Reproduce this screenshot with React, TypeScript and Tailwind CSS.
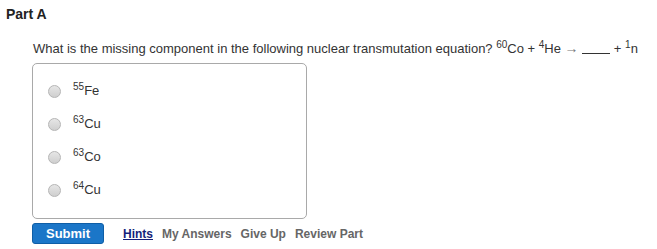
import { Fragment } from 'react';

// ─── Data ─────────────────────────────────────────────────────────────────────

const OPTIONS = [
  { mass: '55', symbol: 'Fe' },
  { mass: '63', symbol: 'Cu' },
  { mass: '63', symbol: 'Co' },
  { mass: '64', symbol: 'Cu' },
];

const LINKS = ['My Answers', 'Give Up', 'Review Part'];

// ─── Pieces ───────────────────────────────────────────────────────────────────

function Isotope({ mass, symbol }: { mass: string; symbol: string }) {
  return (
    <span>
      <sup className="text-[10px] relative -top-[5px]">{mass}</sup>
      {symbol}
    </span>
  );
}

function Radio() {
  return (
    <span className="block w-[13px] h-[13px] rounded-full border border-[#b5b5b5] bg-gradient-to-b from-[#e6e6e6] to-[#cfcfcf]" />
  );
}

// ─── Component ────────────────────────────────────────────────────────────────

export default function App() {
  return (
    <div
      className="w-[657px] h-[249px] bg-white text-[#333] pt-[5px]"
      style={{ fontFamily: '"Liberation Sans", Arial, sans-serif' }}
    >
      <h2 className="pl-[6px] text-[14px] font-bold leading-[18px] text-[#222]">Part A</h2>

      <p className="pl-[33px] mt-[16px] text-[13px] leading-[18px]">
        What is the missing component in the following nuclear transmutation equation?{' '}
        <Isotope mass="60" symbol="Co" /> + <Isotope mass="4" symbol="He" />{' '}
        <span className="text-[#777] text-[14px]">→</span>{' '}
        <span className="inline-block w-[28px] border-b border-[#333] translate-y-[1px]" /> +{' '}
        <Isotope mass="1" symbol="n" />
      </p>

      <div className="ml-[32px] mt-[5px] w-[275px] h-[156px] border border-[#a9a9a9] rounded-[5px] pt-[19px] pl-[15px] flex flex-col gap-[17px]">
        {OPTIONS.map((o, i) => (
          <label key={i} className="flex items-center h-[16px] text-[13px]">
            <Radio />
            <span className="ml-[12px]">
              <Isotope mass={o.mass} symbol={o.symbol} />
            </span>
          </label>
        ))}
      </div>

      <div className="ml-[32px] mt-[4px] flex items-center">
        <button className="w-[72px] h-[21px] rounded-[3px] bg-[#1b76c8] border border-[#0f5ea6] text-white text-[13px] font-bold leading-none">
          Submit
        </button>
        <nav className="ml-[19px] flex items-center gap-[9px] text-[12px] font-bold text-[#666]">
          <a className="text-[#141f7a] underline">Hints</a>
          {LINKS.map((l) => (
            <Fragment key={l}>
              <a>{l}</a>
            </Fragment>
          ))}
        </nav>
      </div>
    </div>
  );
}
